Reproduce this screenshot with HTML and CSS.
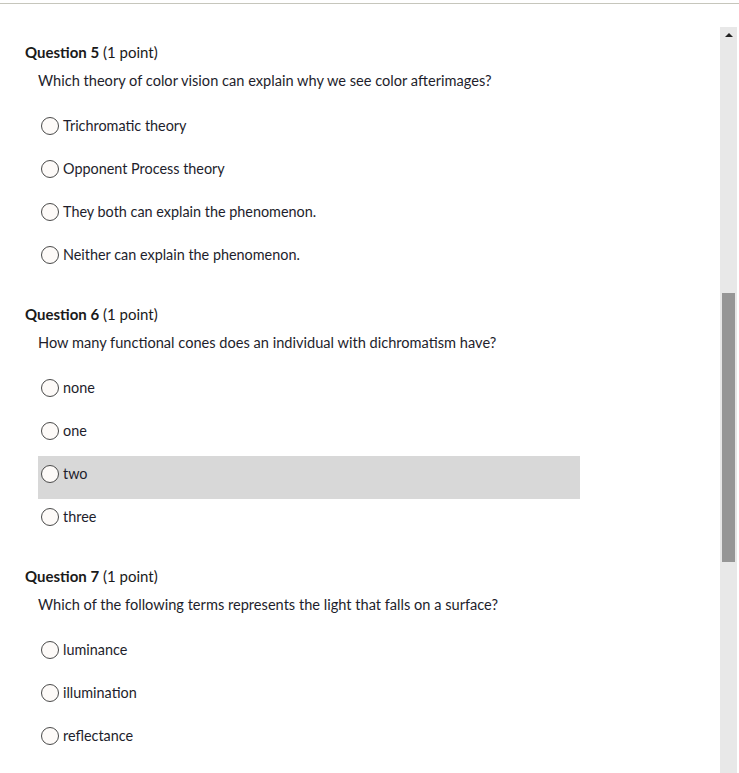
FILE: index.html
```html
<!DOCTYPE html>
<html>
<head>
<meta charset="utf-8">
<link rel="stylesheet" href="styles.css">
</head>
<body>
<div class="topline"></div>
<main class="quiz">
  <section class="question">
    <h2 class="q-title"><b>Question 5</b> (1 point)</h2>
    <p class="q-text">Which theory of color vision can explain why we see color afterimages?</p>
    <ul class="options">
      <li class="option"><span class="radio"></span><span class="label">Trichromatic theory</span></li>
      <li class="option"><span class="radio"></span><span class="label">Opponent Process theory</span></li>
      <li class="option"><span class="radio"></span><span class="label">They both can explain the phenomenon.</span></li>
      <li class="option"><span class="radio"></span><span class="label">Neither can explain the phenomenon.</span></li>
    </ul>
  </section>
  <section class="question">
    <h2 class="q-title"><b>Question 6</b> (1 point)</h2>
    <p class="q-text">How many functional cones does an individual with dichromatism have?</p>
    <ul class="options">
      <li class="option"><span class="radio"></span><span class="label">none</span></li>
      <li class="option"><span class="radio"></span><span class="label">one</span></li>
      <li class="option hover"><span class="radio"></span><span class="label">two</span></li>
      <li class="option"><span class="radio"></span><span class="label">three</span></li>
    </ul>
  </section>
  <section class="question">
    <h2 class="q-title"><b>Question 7</b> (1 point)</h2>
    <p class="q-text">Which of the following terms represents the light that falls on a surface?</p>
    <ul class="options">
      <li class="option"><span class="radio"></span><span class="label">luminance</span></li>
      <li class="option"><span class="radio"></span><span class="label">illumination</span></li>
      <li class="option"><span class="radio"></span><span class="label">reflectance</span></li>
    </ul>
  </section>
</main>
<div class="scrollbar">
  <span class="arrow"></span>
  <span class="thumb"></span>
</div>
</body>
</html>
```
FILE: styles.css
```css
html, body {
  margin: 0;
  padding: 0;
  background: #ffffff;
}
body {
  font-family: Lato, "Open Sans", sans-serif;
  color: #1e1e2c;
  width: 739px;
  height: 773px;
  overflow: hidden;
}
.topline {
  margin-top: 3px;
  height: 1px;
  background: #c6c6bc;
}
.quiz {
  padding: 38px 0 0 25px;
}
.question {
  margin-bottom: 24px;
}
.q-title {
  margin: 0;
  font-size: 15px;
  font-weight: 400;
  line-height: 20px;
  color: #1a1a1a;
}
.q-title b {
  font-weight: 700;
}
.q-text {
  margin: 9px 0 0 13px;
  font-size: 14.6px;
  line-height: 20px;
  color: #1e1e2c;
}
.options {
  list-style: none;
  margin: 17px 0 0 13px;
  padding: 0;
  width: 542px;
}
.option {
  display: flex;
  align-items: center;
  height: 43px;
  box-sizing: border-box;
  padding: 0 0 8px 3px;
  gap: 4px;
  font-size: 14.4px;
}
.option.hover {
  background: #d8d8d8;
}
.radio {
  width: 18px;
  height: 18px;
  box-sizing: border-box;
  border: 1px solid #4a4a4a;
  border-radius: 50%;
  background: #fdfaf8;
  flex: none;
}
.label {
  line-height: 18px;
}
.scrollbar {
  position: fixed;
  top: 27px;
  right: 2px;
  width: 17px;
  bottom: 0;
  background: #e8e8e8;
}
.arrow {
  position: absolute;
  top: 6px;
  left: 5px;
  width: 0;
  height: 0;
  border-left: 4px solid transparent;
  border-right: 4px solid transparent;
  border-bottom: 4px solid #222;
}
.thumb {
  position: absolute;
  top: 266px;
  left: 2px;
  width: 13px;
  height: 269px;
  background: #969696;
}
```
